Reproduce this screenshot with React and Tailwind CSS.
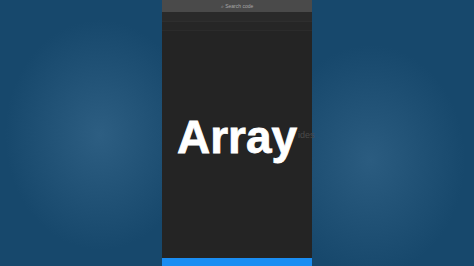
import React from 'react';

const App = () => {
  return (
    <div
      className="flex h-[266px] w-[474px] overflow-hidden bg-[#17486c] bg-[radial-gradient(ellipse_95px_115px_at_100px_135px,#2d5e82,transparent),radial-gradient(ellipse_95px_115px_at_370px_160px,#2b5c80,transparent)]"
      style={{ fontFamily: '"Liberation Sans", Arial, sans-serif' }}
    >
      <div className="w-[162px] shrink-0" />

      <div className="flex w-[150px] shrink-0 flex-col bg-[#242424]">
        <div className="flex h-[12px] items-center justify-center bg-[#4a4a4a]">
          <span className="text-[5px] leading-none text-[#a8a8a8]">⌕ Search code</span>
        </div>
        <div className="h-[10px] border-b border-[#2e2e2e] bg-[#2a2a2a]" />
        <div className="h-[9px] border-b border-[#2b2b2b] bg-[#262626]" />

        <div className="relative flex flex-1 items-center pl-[15px] pb-[16px]">
          <span className="text-[46px] font-bold leading-none text-white [-webkit-text-stroke:0.8px_white]">Array</span>
          <span className="absolute left-[136px] top-[100px] text-[9px] leading-none text-[#4a4a4a]">ides</span>
        </div>

        <div className="h-[8px] bg-[#1a8df2]" />
      </div>

      <div className="flex-1" />
    </div>
  );
};

export default App;
